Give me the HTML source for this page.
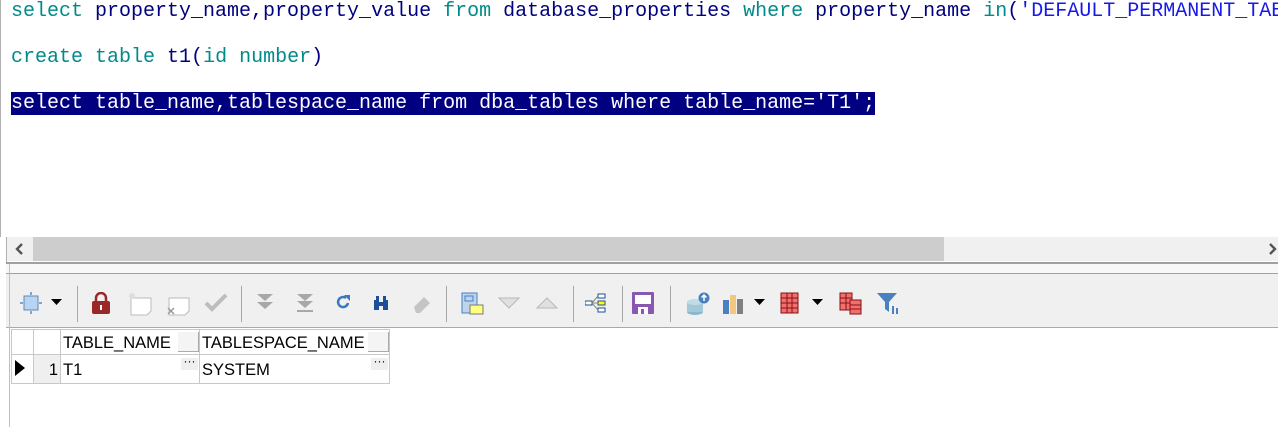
<!DOCTYPE html>
<html><head><meta charset="utf-8"><style>
*{margin:0;padding:0;box-sizing:border-box}
body{width:1278px;height:427px;overflow:hidden;background:#fff;position:relative;font-family:"Liberation Sans",sans-serif}
.ed{position:absolute;left:0;top:0;width:1278px;height:237px;background:#fff;border-left:1px solid #b0b0b0;overflow:hidden}
.ln{position:absolute;left:10px;height:23px;line-height:23px;font-family:"Liberation Mono",monospace;font-size:20px;letter-spacing:0;white-space:pre;color:#000080}
.k{color:#008b8b}.s{color:#1818e8}
.sel{background:#000080;color:#fff}
.abs{position:absolute}
.sep{position:absolute;top:286px;width:1px;height:36px;background:#a8a8a8}
.ic{position:absolute;top:292px}
td{border-right:1px solid #c8c8c8;border-bottom:1px solid #c8c8c8;font-size:16.5px;color:#000;padding:3px 2px 0;position:relative;vertical-align:middle}
</style></head><body>
<div class="ed">
<div class="ln" style="top:0"><span class="k">select</span> property_name,property_value <span class="k">from</span> database_properties <span class="k">where</span> property_name <span class="k">in</span>(<span class="s">'DEFAULT_PERMANENT_TABLESPACE'</span></div>
<div class="ln" style="top:46px"><span class="k">create</span> <span class="k">table</span> t1(<span class="k">id</span> <span class="k">number</span>)</div>
<div class="ln" style="top:92px"><span class="sel">select table_name,tablespace_name from dba_tables where table_name='T1';</span></div>
</div>
<div class="abs" style="left:6px;top:237px;width:1272px;height:24px;background:#f0f0f0"></div>
<div class="abs" style="left:33px;top:237px;width:911px;height:24px;background:#cdcdcd"></div>
<svg class="abs" style="left:14px;top:243px" width="12" height="12"><path d="M8 1L3 6l5 5" stroke="#555" stroke-width="2.4" fill="none"/></svg>
<svg class="abs" style="left:1268px;top:243px" width="10" height="12"><path d="M2 1l5 5-5 5" stroke="#555" stroke-width="2.4" fill="none"/></svg>
<div class="abs" style="left:0;top:237px;width:7px;height:30px;border-right:1px solid #b0b0b0;background:#fff"></div>
<div class="abs" style="left:6px;top:262px;width:1272px;height:2px;background:#a0a0a0"></div>
<div class="abs" style="left:6px;top:264px;width:1272px;height:9px;background:#f8f8f8"></div>
<div class="abs" style="left:6px;top:273px;width:1272px;height:1px;background:#a0a0a0"></div>
<div class="abs" style="left:6px;top:274px;width:1272px;height:54px;background:#f0f0f0;border-bottom:1px solid #a8a8b0"></div>
<div class="abs" style="left:9px;top:264px;width:1px;height:163px;background:#c0c0c0"></div>
<!-- toolbar -->
<svg class="ic" style="left:20px" width="22" height="22"><rect x="4" y="4" width="14" height="14" fill="#b8d4f0" stroke="#5a8ac0"/><path d="M11 0v3M11 19v3M0 11h3M19 11h3" stroke="#5a8ac0" stroke-width="1.5"/></svg>
<svg class="ic" style="left:51px;top:299px" width="12" height="8"><path d="M0 0h11L5.5 6z" fill="#000"/></svg>
<div class="sep" style="left:77px"></div>
<svg class="ic" style="left:90px" width="22" height="22"><path d="M6 10V6a5 5 0 0110 0v4" stroke="#9a2828" stroke-width="2.5" fill="none"/><rect x="2" y="9" width="18" height="13" rx="2" fill="#9a2828"/><rect x="10" y="13" width="2" height="5" fill="#fff"/></svg>
<svg class="ic" style="left:128px" width="24" height="24"><path d="M3 6h20v13l-4 4H3z" fill="#fff" stroke="#bbb"/><circle cx="4" cy="4" r="3" fill="#ddd"/></svg>
<svg class="ic" style="left:166px" width="24" height="24"><path d="M3 6h20v13l-4 4H3z" fill="#fff" stroke="#bbb"/><path d="M2 16l6 6M8 16l-6 6" stroke="#999" stroke-width="1.5"/></svg>
<svg class="ic" style="left:204px" width="24" height="22"><path d="M2 11l6 6L22 3" stroke="#bdbdbd" stroke-width="4" fill="none"/></svg>
<div class="sep" style="left:241px"></div>
<svg class="ic" style="left:255px" width="20" height="22"><path d="M2 2h16l-8 7zM2 10h16l-8 7z" fill="#a8a8a8"/></svg>
<svg class="ic" style="left:295px" width="20" height="22"><path d="M2 2h16l-8 7zM2 9h16l-8 7z" fill="#a8a8a8"/><rect x="2" y="18" width="16" height="2" fill="#a8a8a8"/></svg>
<svg class="ic" style="left:334px" width="18" height="22"><path d="M14 11a5 5 0 11-2-5" stroke="#3a78c0" stroke-width="2.5" fill="none"/><path d="M10 3h6v6z" fill="#3a78c0"/></svg>
<svg class="ic" style="left:372px" width="18" height="22"><path d="M2 8h5v10H2zM11 8h5v10h-5zM4 4h3v5H4zM11 4h3v5h-3zM7 10h4v4H7z" fill="#1e4e9a"/></svg>
<svg class="ic" style="left:410px" width="24" height="22"><path d="M4 15l10-10 6 6-10 10H6z" fill="#c4c4c4"/></svg>
<div class="sep" style="left:446px"></div>
<svg class="ic" style="left:461px" width="24" height="24"><rect x="1" y="1" width="15" height="20" fill="#bcd4ec" stroke="#4a80c0"/><rect x="4" y="4" width="8" height="5" fill="none" stroke="#4a80c0"/><rect x="9" y="13" width="13" height="9" fill="#ffff80" stroke="#777"/></svg>
<svg class="ic" style="left:498px;top:297px" width="22" height="12"><path d="M1 1h20L11 11z" fill="#e0e0e0" stroke="#b8b8b8"/></svg>
<svg class="ic" style="left:536px;top:297px" width="22" height="12"><path d="M1 11h20L11 1z" fill="#e0e0e0" stroke="#b8b8b8"/></svg>
<div class="sep" style="left:573px"></div>
<svg class="ic" style="left:585px" width="22" height="22"><rect x="0" y="9" width="7" height="4" fill="#fff" stroke="#1e4e9a"/><rect x="13" y="2" width="7" height="4" fill="#fff" stroke="#1e4e9a"/><rect x="13" y="9" width="7" height="4" fill="#ff0" stroke="#1e4e9a"/><rect x="13" y="16" width="7" height="4" fill="#fff" stroke="#1e4e9a"/><path d="M7 11l6-7M7 11h6M7 11l6 7" stroke="#888"/></svg>
<div class="sep" style="left:622px"></div>
<svg class="ic" style="left:632px" width="22" height="22"><rect x="0" y="0" width="22" height="22" rx="1" fill="#8a58b0"/><rect x="3" y="3" width="16" height="9" fill="#fff"/><rect x="6" y="15" width="10" height="7" fill="#fff"/><rect x="9" y="17" width="3" height="5" fill="#8a58b0"/></svg>
<div class="sep" style="left:670px"></div>
<svg class="ic" style="left:686px" width="24" height="24"><ellipse cx="9" cy="20" rx="8" ry="3" fill="#8ab8d0"/><rect x="1" y="10" width="16" height="10" fill="#a4c8d8"/><ellipse cx="9" cy="10" rx="8" ry="3" fill="#c0dce8"/><circle cx="18" cy="6" r="5.5" fill="#4a80c0"/><path d="M18 9V3M15.5 5.5L18 3l2.5 2.5" stroke="#fff" stroke-width="1.5" fill="none"/></svg>
<svg class="ic" style="left:722px" width="22" height="22"><rect x="1" y="8" width="6" height="14" fill="#4a80c0"/><rect x="8" y="3" width="6" height="19" fill="#f0c880"/><rect x="15" y="7" width="6" height="15" fill="#808080"/></svg>
<svg class="ic" style="left:754px;top:299px" width="12" height="8"><path d="M0 0h11L5.5 6z" fill="#000"/></svg>
<svg class="ic" style="left:780px" width="20" height="22"><rect x="1" y="1" width="17" height="20" fill="#f07070" stroke="#8a1010"/><path d="M1 6h17M1 11h17M1 16h17M7 1v20M12 1v20" stroke="#8a1010"/></svg>
<svg class="ic" style="left:812px;top:299px" width="12" height="8"><path d="M0 0h11L5.5 6z" fill="#000"/></svg>
<svg class="ic" style="left:839px" width="24" height="24"><rect x="1" y="1" width="12" height="17" fill="#f07070" stroke="#8a1010"/><path d="M1 6h12M1 11h12M7 1v17" stroke="#8a1010"/><rect x="11" y="8" width="11" height="14" fill="#f07070" stroke="#8a1010"/><path d="M11 13h11M11 17h11" stroke="#8a1010"/></svg>
<svg class="ic" style="left:877px" width="24" height="24"><path d="M0 1h20l-8 9v10l-4-3V10z" fill="#4a80c0"/><rect x="15" y="14" width="2" height="8" fill="#4a80c0"/><rect x="19" y="16" width="2" height="6" fill="#4a80c0"/></svg>
<!-- grid -->
<table class="abs" style="left:11px;top:329px;border-collapse:collapse;border-top:1px solid #c8c8c8;border-left:1px solid #c8c8c8;background:#fff;table-layout:fixed">
<tr style="height:25px">
<td style="width:22px"></td><td style="width:27px"></td>
<td style="width:139px">TABLE_NAME<span class="abs" style="right:0;top:2px;width:21px;height:20px;border-right:1px solid #aaa;border-bottom:1px solid #aaa;background:#f4f4f4"></span></td>
<td style="width:190px">TABLESPACE_NAME<span class="abs" style="right:0;top:2px;width:21px;height:20px;border-right:1px solid #aaa;border-bottom:1px solid #aaa;background:#f4f4f4"></span></td></tr>
<tr style="height:29px">
<td><svg width="12" height="18"><path d="M1 1l10 8-10 8z" fill="#000"/></svg></td>
<td style="background:#efefef;text-align:right">1</td>
<td>T1<span class="abs" style="right:1px;top:3px;width:17px;height:12px;background:#efefef;font-size:12px;line-height:6px;text-align:center">···</span></td>
<td>SYSTEM<span class="abs" style="right:1px;top:3px;width:17px;height:12px;background:#efefef;font-size:12px;line-height:6px;text-align:center">···</span></td></tr>
</table>
</body></html>
